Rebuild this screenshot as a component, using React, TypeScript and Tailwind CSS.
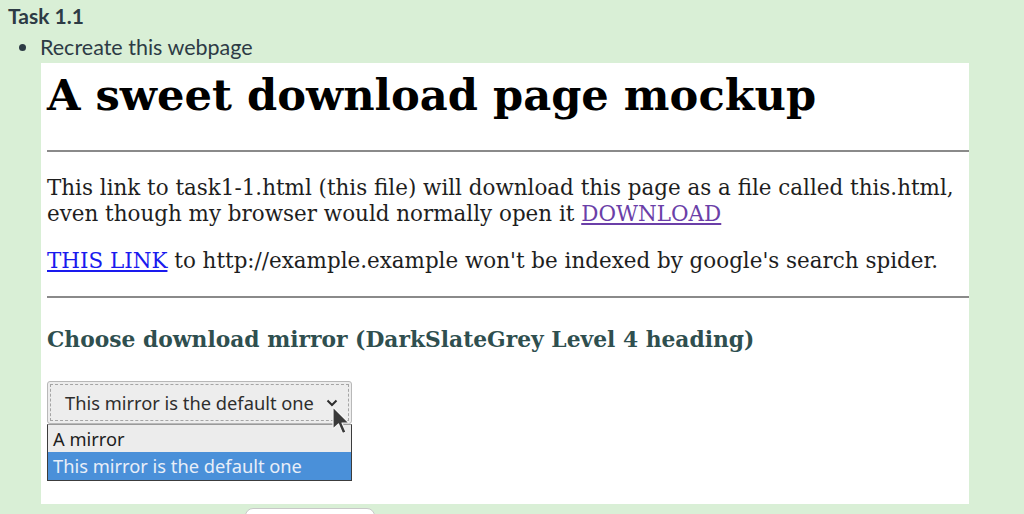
import React from "react";

function Cursor() {
  return (
    <svg width="20" height="30" viewBox="0 0 20 30" className="absolute left-[284px] top-[25px]">
      <path d="M2 1 L2 23 L7.5 18 L11.5 27.5 L15 26 L11 17 L18 17 Z" fill="#3a3a3a" stroke="#f4f4f4" strokeWidth="1.2" strokeLinejoin="round" />
    </svg>
  );
}

export default function App() {
  return (
    <div className="h-[514px] w-[1024px] overflow-hidden bg-[#d9efd6] font-['Lato',sans-serif] text-[#2d3b45]">
      <div className="px-[8px] pt-[3px]">
        <h3 className="text-[21px] font-bold leading-[25px]">Task 1.1</h3>
        <ul className="mt-[7px] flex items-center">
          <li className="ml-[11px] flex items-center gap-[14px] text-[21.5px] leading-[24px]">
            <span className="h-[7px] w-[7px] rounded-full bg-[#2d3b45]" />
            Recreate this webpage
          </li>
        </ul>
      </div>

      <div className="ml-[41px] mt-[4px] h-[441px] w-[928px] bg-white pl-[6px] font-['DejaVu_Serif',serif] text-[#1e1e1e]">
        <h1 className="pt-[8px] text-[43.2px] font-bold leading-[48px] text-black">A sweet download page mockup</h1>
        <hr className="mt-[31px] border-t-2 border-[#8a8a8a]" />
        <p className="mt-[23px] text-[21.45px] leading-[26px]">
          This link to task1-1.html (this file) will download this page as a file called this.html,
          <br />
          even though my browser would normally open it{" "}
          <a className="text-[#6b3fa8] underline">DOWNLOAD</a>
        </p>
        <p className="mt-[21px] text-[21.45px] leading-[26px]">
          <a className="text-[#1a1aee] underline">THIS LINK</a> to http://example.example won't be indexed by google's search spider.
        </p>
        <hr className="mt-[22px] border-t-2 border-[#8a8a8a]" />
        <h4 className="mt-[29px] text-[21.8px] font-bold leading-[26px] text-[#2f4f4f]">
          Choose download mirror (DarkSlateGrey Level 4 heading)
        </h4>
        <div className="relative mt-[28px] w-[305px] font-['Noto_Sans',sans-serif]">
          <div className="flex h-[43px] items-center rounded-[3px] border border-[#b8b8b8] bg-[#ededed] p-[2px]">
            <div className="flex h-full w-full items-center justify-between border border-dashed border-[#a5a5a5] pl-[14px] pr-[10px] text-[18.3px] text-[#2e2e2e]">
              <span>This mirror is the default one</span>
              <svg width="12" height="8" viewBox="0 0 12 8">
                <path d="M1.5 1.5 L6 6 L10.5 1.5" fill="none" stroke="#2e2e2e" strokeWidth="2" />
              </svg>
            </div>
          </div>
          <div className="border border-[#3c3c3c] border-t-[#9a9a9a] bg-[#ececec] text-[18.3px]">
            <div className="h-[27px] pl-[5px] leading-[27px] text-[#1e1e1e]">A mirror</div>
            <div className="h-[28px] bg-[#4a90d9] pl-[5px] leading-[28px] text-[#e8eef8]">This mirror is the default one</div>
          </div>
          <Cursor />
        </div>
      </div>

      <div className="ml-[245px] mt-[4px] h-[20px] w-[130px] rounded-t-[8px] border border-[#c8c8c8] bg-white" />
    </div>
  );
}
